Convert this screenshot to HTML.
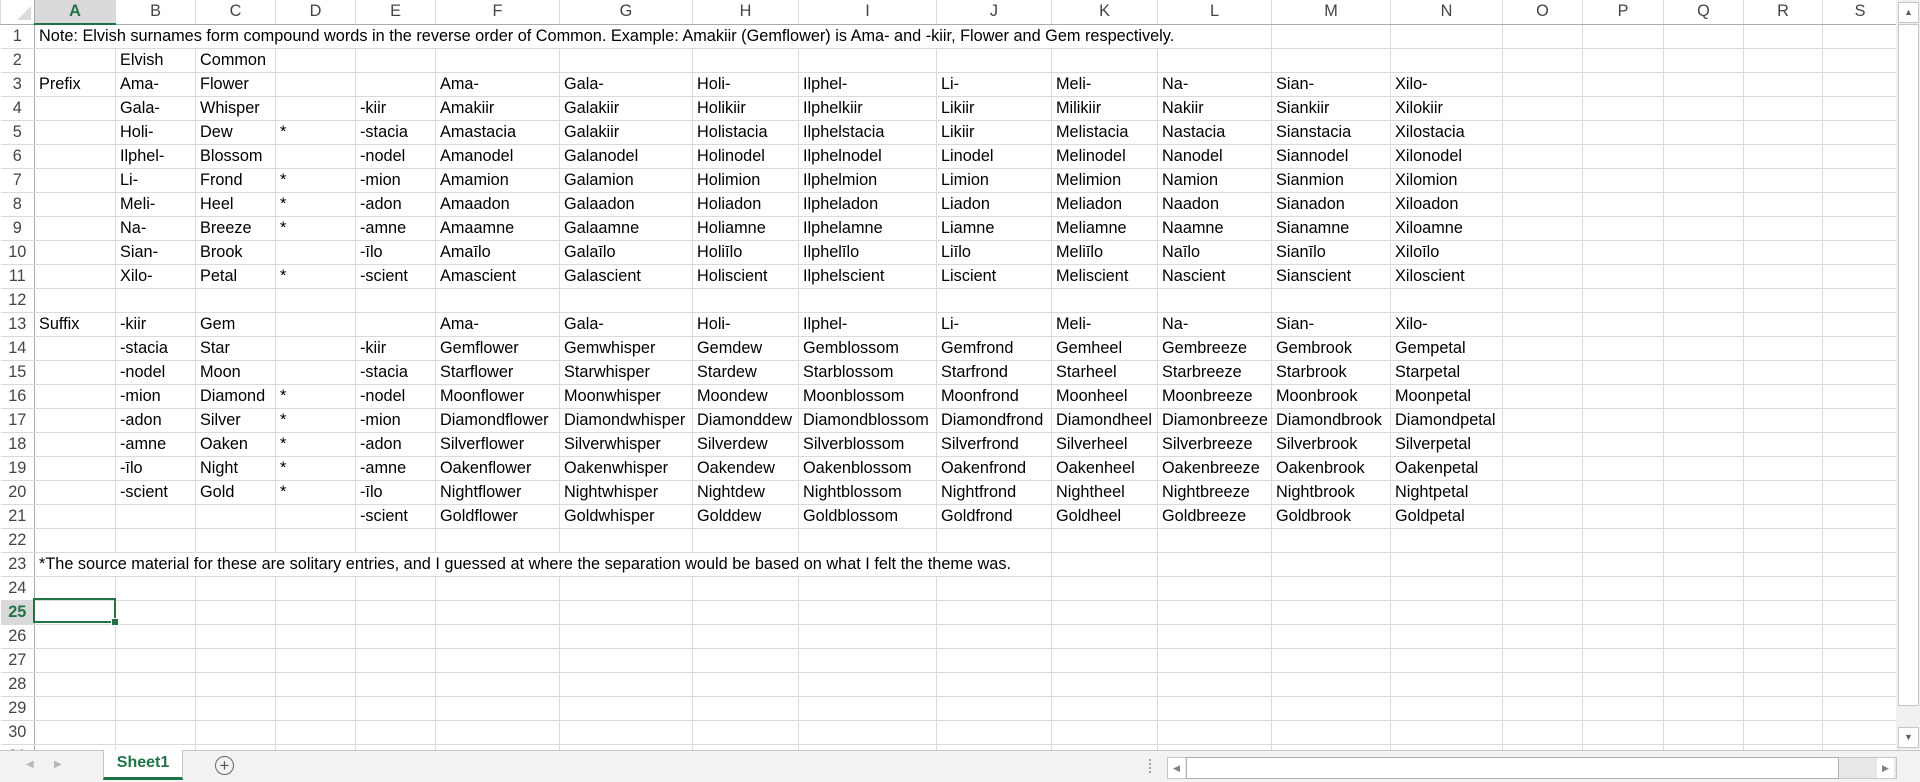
<!DOCTYPE html>
<html><head><meta charset="utf-8">
<style>
html,body{margin:0;padding:0;background:#fff;width:1920px;height:781px;overflow:hidden;font-family:"Liberation Sans",Arial,sans-serif;}
#grid{position:absolute;left:0;top:0;width:1897px;height:750px;overflow:hidden;}
table{border-collapse:collapse;table-layout:fixed;width:1897px;}
td{height:23px;padding:0 0 0 4px;border:1px solid #dadada;font-size:16.3px;color:#000;white-space:nowrap;overflow:visible;line-height:23px;box-sizing:border-box;}
tr.h td{height:23px;text-align:center;padding:0;color:#444;border-bottom:1px solid #ababab;border-top:none;}
td.r{text-align:center;padding:0;color:#444;border-right:1px solid #ababab;border-left:none;}
tr.h td.c{background:#e6e6e6;}
tr.h td.sel{background:#d9d9d9;color:#217346;font-weight:bold;border-bottom:2px solid #217346;}
td.rs{background:#d9d9d9;color:#217346;font-weight:bold;}
#selbox{position:absolute;left:33px;top:598px;width:83px;height:25px;border:2px solid #217346;box-sizing:border-box;}
#selbox:after{content:"";position:absolute;right:-5px;bottom:-5px;width:6px;height:6px;background:#217346;border:1px solid #fff;}
#vs{position:absolute;left:1896px;top:0;width:24px;height:750px;background:#f0f0f0;}
#bar{position:absolute;left:0;top:750px;width:1920px;height:31px;background:#f3f3f3;border-top:1px solid #c6c6c6;}
</style></head><body>
<div id="grid"><table>
<colgroup><col style="width:34px"><col style="width:81px"><col style="width:80px"><col style="width:80px"><col style="width:80px"><col style="width:80px"><col style="width:124px"><col style="width:133px"><col style="width:106px"><col style="width:138px"><col style="width:115px"><col style="width:106px"><col style="width:114px"><col style="width:119px"><col style="width:112px"><col style="width:80px"><col style="width:81px"><col style="width:80px"><col style="width:79px"><col style="width:75px"></colgroup>
<tr class="h"><td class="c" style="background:#fff;border-right:1px solid #ababab"><svg width="20" height="20" style="vertical-align:middle;margin-left:10px"><polygon points="18,4 18,18 4,18" fill="#dcdcdc"/></svg></td><td class="sel">A</td><td>B</td><td>C</td><td>D</td><td>E</td><td>F</td><td>G</td><td>H</td><td>I</td><td>J</td><td>K</td><td>L</td><td>M</td><td>N</td><td>O</td><td>P</td><td>Q</td><td>R</td><td>S</td></tr>
<tr><td class="r">1</td><td colspan="12">Note: Elvish surnames form compound words in the reverse order of Common. Example: Amakiir (Gemflower) is Ama- and -kiir, Flower and Gem respectively.</td><td></td><td></td><td></td><td></td><td></td><td></td><td></td></tr>
<tr><td class="r">2</td><td></td><td>Elvish</td><td>Common</td><td></td><td></td><td></td><td></td><td></td><td></td><td></td><td></td><td></td><td></td><td></td><td></td><td></td><td></td><td></td><td></td></tr>
<tr><td class="r">3</td><td>Prefix</td><td>Ama-</td><td>Flower</td><td></td><td></td><td>Ama-</td><td>Gala-</td><td>Holi-</td><td>Ilphel-</td><td>Li-</td><td>Meli-</td><td>Na-</td><td>Sian-</td><td>Xilo-</td><td></td><td></td><td></td><td></td><td></td></tr>
<tr><td class="r">4</td><td></td><td>Gala-</td><td>Whisper</td><td></td><td>-kiir</td><td>Amakiir</td><td>Galakiir</td><td>Holikiir</td><td>Ilphelkiir</td><td>Likiir</td><td>Milikiir</td><td>Nakiir</td><td>Siankiir</td><td>Xilokiir</td><td></td><td></td><td></td><td></td><td></td></tr>
<tr><td class="r">5</td><td></td><td>Holi-</td><td>Dew</td><td>*</td><td>-stacia</td><td>Amastacia</td><td>Galakiir</td><td>Holistacia</td><td>Ilphelstacia</td><td>Likiir</td><td>Melistacia</td><td>Nastacia</td><td>Sianstacia</td><td>Xilostacia</td><td></td><td></td><td></td><td></td><td></td></tr>
<tr><td class="r">6</td><td></td><td>Ilphel-</td><td>Blossom</td><td></td><td>-nodel</td><td>Amanodel</td><td>Galanodel</td><td>Holinodel</td><td>Ilphelnodel</td><td>Linodel</td><td>Melinodel</td><td>Nanodel</td><td>Siannodel</td><td>Xilonodel</td><td></td><td></td><td></td><td></td><td></td></tr>
<tr><td class="r">7</td><td></td><td>Li-</td><td>Frond</td><td>*</td><td>-mion</td><td>Amamion</td><td>Galamion</td><td>Holimion</td><td>Ilphelmion</td><td>Limion</td><td>Melimion</td><td>Namion</td><td>Sianmion</td><td>Xilomion</td><td></td><td></td><td></td><td></td><td></td></tr>
<tr><td class="r">8</td><td></td><td>Meli-</td><td>Heel</td><td>*</td><td>-adon</td><td>Amaadon</td><td>Galaadon</td><td>Holiadon</td><td>Ilpheladon</td><td>Liadon</td><td>Meliadon</td><td>Naadon</td><td>Sianadon</td><td>Xiloadon</td><td></td><td></td><td></td><td></td><td></td></tr>
<tr><td class="r">9</td><td></td><td>Na-</td><td>Breeze</td><td>*</td><td>-amne</td><td>Amaamne</td><td>Galaamne</td><td>Holiamne</td><td>Ilphelamne</td><td>Liamne</td><td>Meliamne</td><td>Naamne</td><td>Sianamne</td><td>Xiloamne</td><td></td><td></td><td></td><td></td><td></td></tr>
<tr><td class="r">10</td><td></td><td>Sian-</td><td>Brook</td><td></td><td>-īlo</td><td>Amaīlo</td><td>Galaīlo</td><td>Holiīlo</td><td>Ilphelīlo</td><td>Liīlo</td><td>Meliīlo</td><td>Naīlo</td><td>Sianīlo</td><td>Xiloīlo</td><td></td><td></td><td></td><td></td><td></td></tr>
<tr><td class="r">11</td><td></td><td>Xilo-</td><td>Petal</td><td>*</td><td>-scient</td><td>Amascient</td><td>Galascient</td><td>Holiscient</td><td>Ilphelscient</td><td>Liscient</td><td>Meliscient</td><td>Nascient</td><td>Sianscient</td><td>Xiloscient</td><td></td><td></td><td></td><td></td><td></td></tr>
<tr><td class="r">12</td><td></td><td></td><td></td><td></td><td></td><td></td><td></td><td></td><td></td><td></td><td></td><td></td><td></td><td></td><td></td><td></td><td></td><td></td><td></td></tr>
<tr><td class="r">13</td><td>Suffix</td><td>-kiir</td><td>Gem</td><td></td><td></td><td>Ama-</td><td>Gala-</td><td>Holi-</td><td>Ilphel-</td><td>Li-</td><td>Meli-</td><td>Na-</td><td>Sian-</td><td>Xilo-</td><td></td><td></td><td></td><td></td><td></td></tr>
<tr><td class="r">14</td><td></td><td>-stacia</td><td>Star</td><td></td><td>-kiir</td><td>Gemflower</td><td>Gemwhisper</td><td>Gemdew</td><td>Gemblossom</td><td>Gemfrond</td><td>Gemheel</td><td>Gembreeze</td><td>Gembrook</td><td>Gempetal</td><td></td><td></td><td></td><td></td><td></td></tr>
<tr><td class="r">15</td><td></td><td>-nodel</td><td>Moon</td><td></td><td>-stacia</td><td>Starflower</td><td>Starwhisper</td><td>Stardew</td><td>Starblossom</td><td>Starfrond</td><td>Starheel</td><td>Starbreeze</td><td>Starbrook</td><td>Starpetal</td><td></td><td></td><td></td><td></td><td></td></tr>
<tr><td class="r">16</td><td></td><td>-mion</td><td>Diamond</td><td>*</td><td>-nodel</td><td>Moonflower</td><td>Moonwhisper</td><td>Moondew</td><td>Moonblossom</td><td>Moonfrond</td><td>Moonheel</td><td>Moonbreeze</td><td>Moonbrook</td><td>Moonpetal</td><td></td><td></td><td></td><td></td><td></td></tr>
<tr><td class="r">17</td><td></td><td>-adon</td><td>Silver</td><td>*</td><td>-mion</td><td>Diamondflower</td><td>Diamondwhisper</td><td>Diamonddew</td><td>Diamondblossom</td><td>Diamondfrond</td><td>Diamondheel</td><td>Diamonbreeze</td><td>Diamondbrook</td><td>Diamondpetal</td><td></td><td></td><td></td><td></td><td></td></tr>
<tr><td class="r">18</td><td></td><td>-amne</td><td>Oaken</td><td>*</td><td>-adon</td><td>Silverflower</td><td>Silverwhisper</td><td>Silverdew</td><td>Silverblossom</td><td>Silverfrond</td><td>Silverheel</td><td>Silverbreeze</td><td>Silverbrook</td><td>Silverpetal</td><td></td><td></td><td></td><td></td><td></td></tr>
<tr><td class="r">19</td><td></td><td>-īlo</td><td>Night</td><td>*</td><td>-amne</td><td>Oakenflower</td><td>Oakenwhisper</td><td>Oakendew</td><td>Oakenblossom</td><td>Oakenfrond</td><td>Oakenheel</td><td>Oakenbreeze</td><td>Oakenbrook</td><td>Oakenpetal</td><td></td><td></td><td></td><td></td><td></td></tr>
<tr><td class="r">20</td><td></td><td>-scient</td><td>Gold</td><td>*</td><td>-īlo</td><td>Nightflower</td><td>Nightwhisper</td><td>Nightdew</td><td>Nightblossom</td><td>Nightfrond</td><td>Nightheel</td><td>Nightbreeze</td><td>Nightbrook</td><td>Nightpetal</td><td></td><td></td><td></td><td></td><td></td></tr>
<tr><td class="r">21</td><td></td><td></td><td></td><td></td><td>-scient</td><td>Goldflower</td><td>Goldwhisper</td><td>Golddew</td><td>Goldblossom</td><td>Goldfrond</td><td>Goldheel</td><td>Goldbreeze</td><td>Goldbrook</td><td>Goldpetal</td><td></td><td></td><td></td><td></td><td></td></tr>
<tr><td class="r">22</td><td></td><td></td><td></td><td></td><td></td><td></td><td></td><td></td><td></td><td></td><td></td><td></td><td></td><td></td><td></td><td></td><td></td><td></td><td></td></tr>
<tr><td class="r">23</td><td colspan="10">*The source material for these are solitary entries, and I guessed at where the separation would be based on what I felt the theme was.</td><td></td><td></td><td></td><td></td><td></td><td></td><td></td><td></td><td></td></tr>
<tr><td class="r">24</td><td></td><td></td><td></td><td></td><td></td><td></td><td></td><td></td><td></td><td></td><td></td><td></td><td></td><td></td><td></td><td></td><td></td><td></td><td></td></tr>
<tr><td class="r rs">25</td><td></td><td></td><td></td><td></td><td></td><td></td><td></td><td></td><td></td><td></td><td></td><td></td><td></td><td></td><td></td><td></td><td></td><td></td><td></td></tr>
<tr><td class="r">26</td><td></td><td></td><td></td><td></td><td></td><td></td><td></td><td></td><td></td><td></td><td></td><td></td><td></td><td></td><td></td><td></td><td></td><td></td><td></td></tr>
<tr><td class="r">27</td><td></td><td></td><td></td><td></td><td></td><td></td><td></td><td></td><td></td><td></td><td></td><td></td><td></td><td></td><td></td><td></td><td></td><td></td><td></td></tr>
<tr><td class="r">28</td><td></td><td></td><td></td><td></td><td></td><td></td><td></td><td></td><td></td><td></td><td></td><td></td><td></td><td></td><td></td><td></td><td></td><td></td><td></td></tr>
<tr><td class="r">29</td><td></td><td></td><td></td><td></td><td></td><td></td><td></td><td></td><td></td><td></td><td></td><td></td><td></td><td></td><td></td><td></td><td></td><td></td><td></td></tr>
<tr><td class="r">30</td><td></td><td></td><td></td><td></td><td></td><td></td><td></td><td></td><td></td><td></td><td></td><td></td><td></td><td></td><td></td><td></td><td></td><td></td><td></td></tr>
<tr><td class="r">31</td><td></td><td></td><td></td><td></td><td></td><td></td><td></td><td></td><td></td><td></td><td></td><td></td><td></td><td></td><td></td><td></td><td></td><td></td><td></td></tr>
</table></div>
<div id="selbox"></div>
<div id="vs">
  <div style="position:absolute;left:2px;top:2px;width:19px;height:19px;background:#fff;border:1px solid #c6c6c6;text-align:center;font-size:9px;line-height:19px;color:#606060">▲</div>
  <div style="position:absolute;left:2px;top:24px;width:19px;height:680px;background:#fff;border:1px solid #c6c6c6"></div>
  <div style="position:absolute;left:2px;top:727px;width:19px;height:19px;background:#fff;border:1px solid #c6c6c6;text-align:center;font-size:9px;line-height:19px;color:#606060">▼</div>
</div>
<div id="bar">
  <div style="position:absolute;left:26px;top:8px;font-size:10px;color:#b8b8b8">◀</div>
  <div style="position:absolute;left:54px;top:8px;font-size:10px;color:#b8b8b8">▶</div>
  <div style="position:absolute;left:103px;top:-1px;width:78px;height:27px;background:#fff;border-left:1px solid #c6c6c6;border-right:1px solid #c6c6c6;border-bottom:3px solid #217346;text-align:center;font-weight:bold;color:#217346;font-size:16px;line-height:26px">Sheet1</div>
  <div style="position:absolute;left:215px;top:5px;width:17px;height:17px;border:1px solid #666;border-radius:50%;text-align:center;line-height:17px;font-size:17px;color:#555">+</div>
  <div style="position:absolute;left:1149px;top:8px;width:2px;height:14px;border-left:2px dotted #a0a0a0"></div>
  <div style="position:absolute;left:1167px;top:6px;width:728px;height:20px;background:#e8e8e8;border:1px solid #c6c6c6"></div>
  <div style="position:absolute;left:1168px;top:7px;width:17px;height:20px;background:#fff;text-align:center;font-size:9px;line-height:20px;color:#808080">◀</div>
  <div style="position:absolute;left:1186px;top:6px;width:651px;height:20px;background:#fff;border:1px solid #b0b0b0"></div>
  <div style="position:absolute;left:1877px;top:7px;width:17px;height:20px;background:#fff;text-align:center;font-size:9px;line-height:20px;color:#808080">▶</div>
</div>
</body></html>
